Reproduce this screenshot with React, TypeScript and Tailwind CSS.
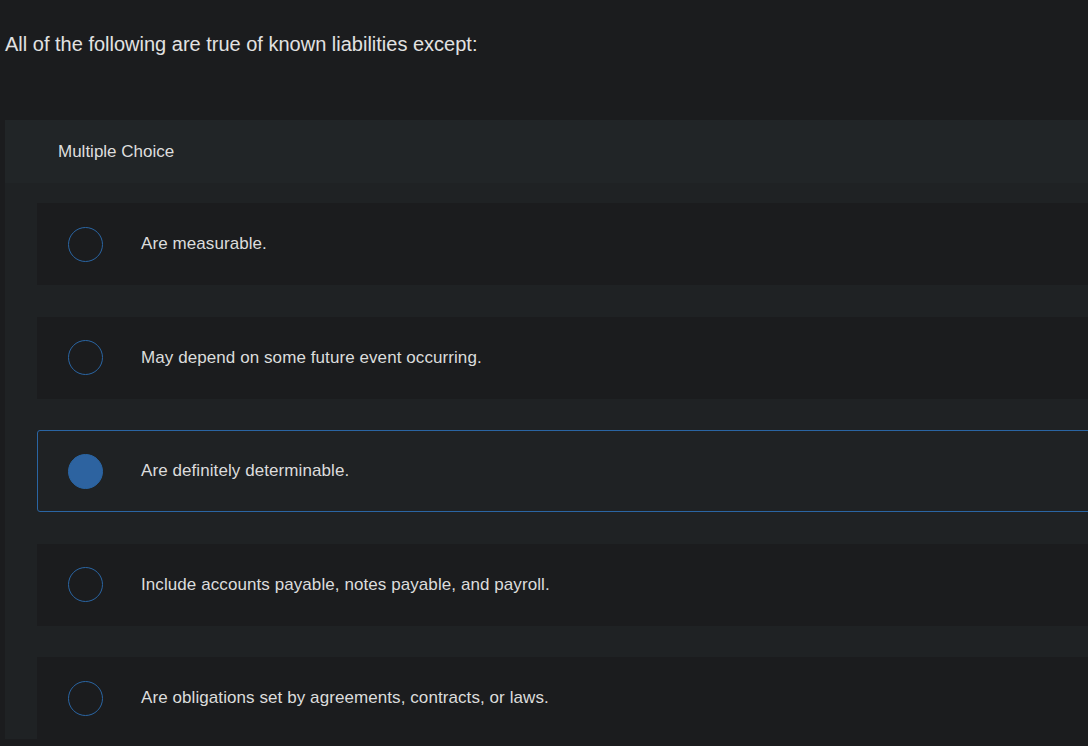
const OPTIONS = [
  'Are measurable.',
  'May depend on some future event occurring.',
  'Are definitely determinable.',
  'Include accounts payable, notes payable, and payroll.',
  'Are obligations set by agreements, contracts, or laws.',
];

const SELECTED = 2;

export default function App() {
  return (
    <div
      className="h-[746px] w-[1088px] overflow-hidden bg-[#1b1c1e] text-[#dcdcdc]"
      style={{ fontFamily: '"Liberation Sans", Arial, sans-serif' }}
    >
      <p className="pl-[5px] pt-[31px] text-[20px] leading-[26px] text-[#e2e2e2]">
        All of the following are true of known liabilities except:
      </p>

      <section className="ml-[5px] mt-[63px] w-[1200px] bg-[#1f2224]">
        <header className="flex h-[63px] items-center bg-[#212527] pl-[53px] text-[17px] text-[#dedede]">
          Multiple Choice
        </header>
        <ul className="flex flex-col gap-[31.5px] pl-[32px] pt-[20px]">
          {OPTIONS.map((opt, i) => {
            const on = i === SELECTED;
            return (
              <li
                key={opt}
                className={
                  on
                    ? 'flex h-[82px] items-center rounded-[3px] border border-[#2a65a3] bg-[#1f2224] pl-[30px]'
                    : 'flex h-[82px] items-center bg-[#1b1c1e] pl-[31px]'
                }
              >
                <span
                  className={
                    on
                      ? 'size-[35px] shrink-0 rounded-full border border-[#2a65a3] bg-[#2d63a0]'
                      : 'size-[35px] shrink-0 rounded-full border border-[#2a65a3]'
                  }
                />
                <span className="ml-[38px] text-[17px] tracking-[0.08px] text-[#dcdcdc]">
                  {opt}
                </span>
              </li>
            );
          })}
        </ul>
      </section>
    </div>
  );
}
